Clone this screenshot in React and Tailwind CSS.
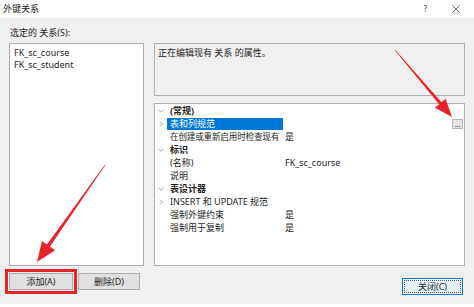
const rows = [
  { kind: "cat", label: "(常规)" },
  { kind: "prop", label: "表和列规范", expand: true, selected: true, dots: true },
  { kind: "prop", label: "在创建或重新启用时检查现有", value: "是", tight: true },
  { kind: "cat", label: "标识" },
  { kind: "prop", label: "(名称)", value: "FK_sc_course" },
  { kind: "prop", label: "说明" },
  { kind: "cat", label: "表设计器" },
  { kind: "prop", label: "INSERT 和 UPDATE 规范", expand: true },
  { kind: "prop", label: "强制外键约束", value: "是" },
  { kind: "prop", label: "强制用于复制", value: "是" },
];

function Chevron({ down }) {
  return (
    <svg width="6" height="6" viewBox="0 0 6 6" className="text-[#9a9a9a]">
      {down ? (
        <path d="M0.5 1.8 L3 4.3 L5.5 1.8" fill="none" stroke="currentColor" strokeWidth="0.9" />
      ) : (
        <path d="M1.8 0.5 L4.3 3 L1.8 5.5" fill="none" stroke="currentColor" strokeWidth="0.9" />
      )}
    </svg>
  );
}

function PropRow({ row }) {
  return (
    <div className="flex h-[13px] items-center">
      <div className="flex w-[12px] shrink-0 items-center justify-center">
        {row.kind === "cat" && <Chevron down />}
        {row.expand && <Chevron />}
      </div>
      {row.kind === "cat" ? (
        <div className="pl-[3px] font-bold text-[#1e1e1e]">{row.label}</div>
      ) : (
        <>
          <div
            className={`flex h-[12px] w-[116px] shrink-0 items-center overflow-hidden whitespace-nowrap pl-[3px] ${
              row.selected ? "bg-[#0078d7] text-white" : "text-[#1e1e1e]"
            } ${row.tight ? "text-[8.6px] tracking-[-0.2px]" : ""}`}
          >
            {row.label}
          </div>
          <div className="relative flex h-[12px] flex-1 items-center pl-[2px] text-[#1e1e1e]">
            {row.value}
            {row.dots && (
              <div className="absolute right-[1px] top-[1px] flex h-[10px] w-[11px] items-end justify-center border border-[#b4b4b4] bg-[#e6e6e6] pb-[1px] text-[7px] leading-[5px] text-[#333]">
                ...
              </div>
            )}
          </div>
        </>
      )}
    </div>
  );
}

export default function App() {
  return (
    <div
      className="relative h-[307px] w-[474px] overflow-hidden bg-white text-[9px] leading-[12px] text-[#1e1e1e]"
      style={{ fontFamily: '"Noto Sans", "Noto Sans CJK SC", sans-serif' }}
    >
      {/* Title bar */}
      <div className="flex h-[18px] items-center justify-between pl-[3px] pr-[14px]">
        <span className="text-[#222]">外键关系</span>
        <div className="flex items-center gap-[25px] text-[#444]">
          <span className="text-[8px]">?</span>
          <svg width="8" height="8" viewBox="0 0 8 8">
            <path d="M0.5 0.5 L7.5 7.5 M7.5 0.5 L0.5 7.5" stroke="#444" strokeWidth="0.8" />
          </svg>
        </div>
      </div>

      {/* Body */}
      <div className="h-[286px] bg-[#f0f0f0]">
        <div className="pl-[10px] pt-[9px]">选定的 关系(S):</div>

        <div className="mt-[4px] flex h-[223px] pl-[9px]">
          {/* Relationship list */}
          <div className="w-[135px] border border-[#a9a9a9] bg-white pl-[4px] pt-[3px]">
            <div>FK_sc_course</div>
            <div>FK_sc_student</div>
          </div>

          <div className="ml-[10px] flex w-[311px] flex-col gap-[7px]">
            {/* Description */}
            <div className="h-[53px] border border-[#b0b0b0] bg-[#f0f0f0] pl-[3px] pt-[3px]">
              正在编辑现有 关系 的属性。
            </div>

            {/* Property grid */}
            <div className="flex-1 border border-[#b0b0b0] bg-white">
              {rows.map((row, i) => (
                <PropRow key={i} row={row} />
              ))}
            </div>
          </div>
        </div>

        {/* Buttons */}
        <div className="mt-[3px] flex items-start pl-[5px] pr-[11px]">
          <div className="border-[3px] border-[#e32626] p-[1px]">
            <button className="h-[17px] w-[64px] border border-[#adadad] bg-[#e1e1e1] text-[9px] leading-[15px]">
              添加(A)
            </button>
          </div>
          <button className="ml-[1px] mt-[4px] h-[17px] w-[62px] border border-[#adadad] bg-[#e1e1e1] text-[9px] leading-[15px]">
            删除(D)
          </button>
          <button className="ml-auto mt-[9px] h-[17px] w-[61px] border border-[#0078d7] bg-[#e5f1fb] p-[1px] text-[9px]">
            <div className="flex h-full w-full items-center justify-center border border-dotted border-[#555]">
              关闭(C)
            </div>
          </button>
        </div>
      </div>

      {/* Annotation arrows */}
      <svg className="pointer-events-none absolute left-0 top-0" width="474" height="307">
        <polygon
          points="394.8,50.2 439.1,104.3 435,107.8 452,117 445.6,98.8 441.5,102.3 395.2,49.8"
          fill="#e8232a"
        />
        <polygon
          points="104.75,164.8 47,244.6 41.95,241 37,262 55.05,250.2 50,246.6 105.25,165.2"
          fill="#e8232a"
        />
      </svg>
    </div>
  );
}
